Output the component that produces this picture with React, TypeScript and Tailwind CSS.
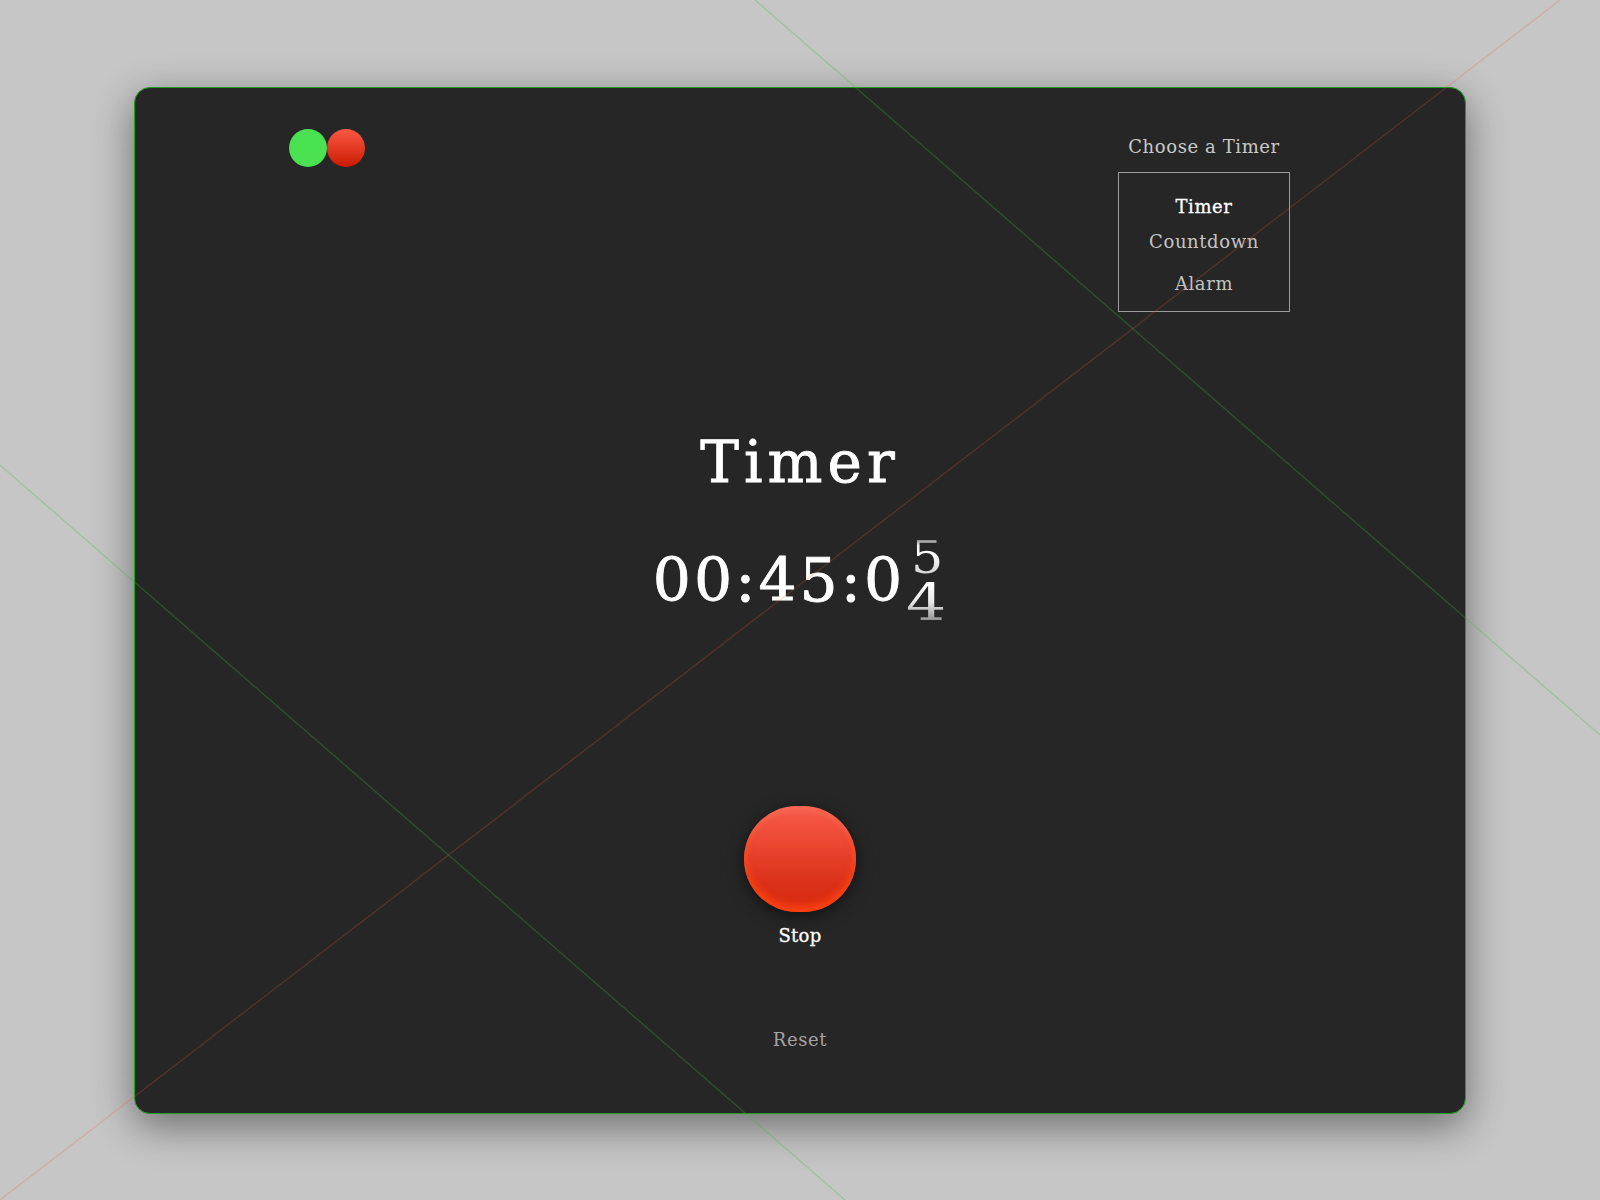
import React from "react";

const typeFace = { fontFamily: '"DejaVu Serif", "Liberation Serif", serif' };

function Guides() {
  return (
    <svg
      className="pointer-events-none absolute inset-0 z-10"
      width={1600}
      height={1200}
      viewBox="0 0 1600 1200"
    >
      <line x1={755} y1={0} x2={1600} y2={735} stroke="rgba(70,180,70,0.28)" strokeWidth={1.5} />
      <line x1={0} y1={465} x2={845} y2={1200} stroke="rgba(70,180,70,0.28)" strokeWidth={1.5} />
      <line x1={1560} y1={0} x2={0} y2={1200} stroke="rgba(220,100,70,0.22)" strokeWidth={1.5} />
    </svg>
  );
}

function ModeMenu() {
  return (
    <div className="mt-[6px] flex w-[172px] flex-col items-center">
      <div className="text-[18px] leading-6 tracking-[0.6px] text-[#c9c9c9]">Choose a Timer</div>
      <div className="mt-[13px] flex h-[140px] w-[172px] flex-col items-center border border-[#9c9c9c] pt-[22px]">
        <div className="text-[18px] leading-6 tracking-[0.6px] text-white [-webkit-text-stroke:0.3px_#fff]">Timer</div>
        <div className="mt-[11px] text-[18px] leading-6 tracking-[0.6px] text-[#c4c4c4]">Countdown</div>
        <div className="mt-[18px] text-[18px] leading-6 tracking-[0.6px] text-[#c4c4c4]">Alarm</div>
      </div>
    </div>
  );
}

export default function App() {
  return (
    <div
      className="relative flex h-[1200px] w-[1600px] items-center justify-center overflow-hidden bg-[#c6c6c6]"
      style={typeFace}
    >
      <div className="flex h-[1027px] w-[1332px] flex-col rounded-[16px] border border-[#1f9e1f] bg-[#262626] shadow-[0_12px_40px_rgba(0,0,0,0.45)]">
        {/* top bar: window dots + mode picker */}
        <div className="flex items-start justify-between pl-[154px] pr-[175px] pt-[41px]">
          <div className="flex">
            <span className="h-[38px] w-[38px] rounded-full bg-[#4ae250]" />
            <span className="h-[38px] w-[38px] rounded-full bg-[linear-gradient(180deg,#f85845_0%,#e43a24_50%,#c81a00_100%)]" />
          </div>
          <ModeMenu />
        </div>

        {/* clock face */}
        <div className="flex flex-col items-center">
          <h1 className="mt-[121px] text-[58px] leading-[58px] tracking-[5px] text-white [-webkit-text-stroke:0.8px_#fff]">
            Timer
          </h1>
          <div className="mt-[59px] flex items-start text-[60px] leading-[60px] text-white">
            <span className="tracking-[3px] [-webkit-text-stroke:0.8px_#fff]">00:45:0</span>
            {/* rolling seconds digit: outgoing 5 above, incoming 4 below */}
            <span className="relative h-[60px] w-[42px]">
              <span className="absolute left-[6px] top-[-10px] origin-left scale-x-[1.08] bg-[linear-gradient(180deg,rgba(220,220,220,0.55)_0%,#f4f4f4_16%,#ffffff_40%,#d4d4d4_100%)] bg-clip-text text-[47px] leading-[34px] text-transparent">
                5
              </span>
              <span className="absolute left-[1px] top-[32px] origin-left scale-x-[1.15] bg-[linear-gradient(180deg,#ffffff_0%,#e8e8e8_50%,#8a8a8a_100%)] bg-clip-text text-[55px] leading-[40px] text-transparent">
                4
              </span>
            </span>
          </div>

          <button className="mt-[196px] h-[106px] w-[112px] rounded-full bg-[linear-gradient(180deg,#f65c4a_0%,#ea442e_40%,#da3018_75%,#d82a10_100%)] shadow-[inset_0_-6px_9px_rgba(255,70,16,0.9),inset_0_4px_6px_rgba(255,150,120,0.3),0_4px_16px_rgba(0,0,0,0.55)]" />
          <div className="mt-[12px] text-[18px] leading-6 tracking-[0.3px] text-white [-webkit-text-stroke:0.3px_#fff]">Stop</div>
          <div className="mt-[80px] text-[18px] leading-6 tracking-[0.6px] text-[#a3a3a3]">Reset</div>
        </div>
      </div>
      <Guides />
    </div>
  );
}
